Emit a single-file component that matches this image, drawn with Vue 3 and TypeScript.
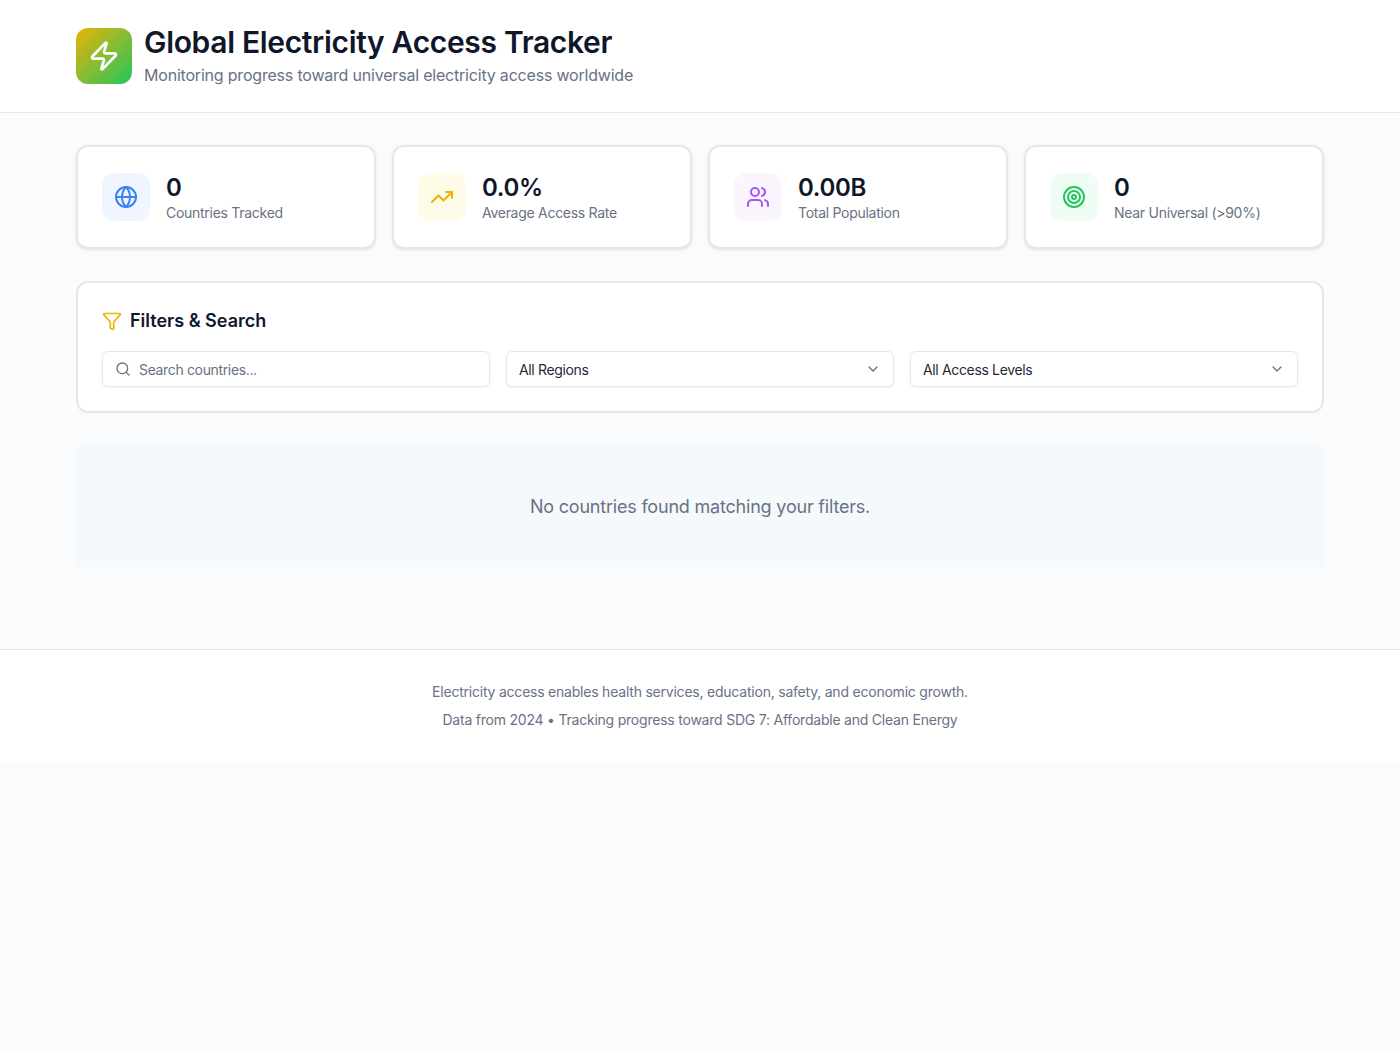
<script setup lang="ts">
const stats = [
  { value: '0', label: 'Countries Tracked', tone: 'blue', icon: 'globe' },
  { value: '0.0%', label: 'Average Access Rate', tone: 'yellow', icon: 'trend' },
  { value: '0.00B', label: 'Total Population', tone: 'purple', icon: 'users' },
  { value: '0', label: 'Near Universal (>90%)', tone: 'green', icon: 'target' },
]
const selects = ['All Regions', 'All Access Levels']
</script>

<template>
  <div class="page">
    <header class="header">
      <div class="wrap header__inner">
        <div class="logo">
          <svg width="32" height="32" viewBox="0 0 24 24" fill="none" stroke="#fff" stroke-width="2" stroke-linecap="round" stroke-linejoin="round">
            <path d="M4 14a1 1 0 0 1-.78-1.63l9.9-10.2a.5.5 0 0 1 .86.46l-1.92 6.02A1 1 0 0 0 13 10h7a1 1 0 0 1 .78 1.63l-9.9 10.2a.5.5 0 0 1-.86-.46l1.92-6.02A1 1 0 0 0 11 14z" />
          </svg>
        </div>
        <div>
          <h1 class="title">Global Electricity Access Tracker</h1>
          <p class="subtitle">Monitoring progress toward universal electricity access worldwide</p>
        </div>
      </div>
    </header>

    <main class="wrap main">
      <section class="stats">
        <div v-for="s in stats" :key="s.label" class="card stat">
          <div class="stat__icon" :class="`stat__icon--${s.tone}`">
            <svg width="24" height="24" viewBox="0 0 24 24" fill="none" stroke="currentColor" stroke-width="2" stroke-linecap="round" stroke-linejoin="round">
              <template v-if="s.icon === 'globe'">
                <circle cx="12" cy="12" r="10" />
                <path d="M12 2a14.5 14.5 0 0 0 0 20 14.5 14.5 0 0 0 0-20" />
                <path d="M2 12h20" />
              </template>
              <template v-else-if="s.icon === 'trend'">
                <path d="M16 7h6v6" />
                <path d="m22 7-8.5 8.5-5-5L2 17" />
              </template>
              <template v-else-if="s.icon === 'users'">
                <path d="M16 21v-2a4 4 0 0 0-4-4H6a4 4 0 0 0-4 4v2" />
                <circle cx="9" cy="7" r="4" />
                <path d="M22 21v-2a4 4 0 0 0-3-3.87" />
                <path d="M16 3.13a4 4 0 0 1 0 7.75" />
              </template>
              <template v-else>
                <circle cx="12" cy="12" r="10" />
                <circle cx="12" cy="12" r="6" />
                <circle cx="12" cy="12" r="2" />
              </template>
            </svg>
          </div>
          <div>
            <div class="stat__value">{{ s.value }}</div>
            <div class="stat__label">{{ s.label }}</div>
          </div>
        </div>
      </section>

      <section class="card filters">
        <h2 class="filters__title">
          <svg width="20" height="20" viewBox="0 0 24 24" fill="none" stroke="#eab308" stroke-width="2" stroke-linecap="round" stroke-linejoin="round">
            <path d="M10 20a1 1 0 0 0 .55.9l2 1A1 1 0 0 0 14 21v-7a2 2 0 0 1 .52-1.34L21.74 4.67A1 1 0 0 0 21 3H3a1 1 0 0 0-.74 1.67l7.22 7.99A2 2 0 0 1 10 14z" />
          </svg>
          Filters &amp; Search
        </h2>
        <div class="filters__row">
          <div class="control">
            <svg width="16" height="16" viewBox="0 0 24 24" fill="none" stroke="#6b7280" stroke-width="2" stroke-linecap="round" stroke-linejoin="round">
              <path d="m21 21-4.34-4.34" />
              <circle cx="11" cy="11" r="8" />
            </svg>
            <span class="control__placeholder">Search countries...</span>
          </div>
          <div v-for="label in selects" :key="label" class="control control--select">
            <span>{{ label }}</span>
            <svg width="16" height="16" viewBox="0 0 24 24" fill="none" stroke="#6b7280" stroke-width="2" stroke-linecap="round" stroke-linejoin="round">
              <path d="m6 9 6 6 6-6" />
            </svg>
          </div>
        </div>
      </section>

      <section class="empty">No countries found matching your filters.</section>
    </main>

    <footer class="footer">
      <p>Electricity access enables health services, education, safety, and economic growth.</p>
      <p>Data from 2024 • Tracking progress toward SDG 7: Affordable and Clean Energy</p>
    </footer>
  </div>
</template>

<style>
body {
  background: #f9fbfd;
}
</style>

<style scoped>
.page {
  font-family: Inter, "Noto Sans", sans-serif;
  color: #0f172a;
}

.wrap {
  width: 1248px;
  margin: 0 auto;
}

.header {
  height: 113px;
  box-sizing: border-box;
  background: #fff;
  border-bottom: 1px solid #e5e7eb;
}

.header__inner {
  display: flex;
  align-items: center;
  gap: 12px;
  height: 112px;
}

.logo {
  width: 56px;
  height: 56px;
  border-radius: 12px;
  background: linear-gradient(135deg, #eab308, #22c55e);
  display: flex;
  align-items: center;
  justify-content: center;
}

.title {
  margin: 0;
  font-size: 30px;
  line-height: 36px;
  font-weight: 600;
  letter-spacing: -0.33px;
}

.subtitle {
  margin: 3px 0 1px;
  font-size: 16px;
  line-height: 24px;
  letter-spacing: -0.2px;
  color: #687284;
}

.main {
  padding-top: 32px;
}

.card {
  box-sizing: border-box;
  background: #fff;
  border: 2px solid #e5e7eb;
  border-radius: 12px;
}

.stats {
  display: grid;
  grid-template-columns: repeat(4, 1fr);
  gap: 16px;
}

.stat {
  height: 104px;
  padding: 0 24px;
  display: flex;
  align-items: center;
  gap: 16px;
  box-shadow: 0 1px 3px rgba(0, 0, 0, 0.1);
}

.stat__icon {
  width: 48px;
  height: 48px;
  border-radius: 12px;
  display: flex;
  align-items: center;
  justify-content: center;
}
.stat__icon--blue {
  background: #eff6ff;
  color: #3b82f6;
}
.stat__icon--yellow {
  background: #fefce8;
  color: #eab308;
}
.stat__icon--purple {
  background: #faf5ff;
  color: #a855f7;
}
.stat__icon--green {
  background: #f0fdf4;
  color: #22c55e;
}

.stat__value {
  font-size: 24px;
  line-height: 32px;
  font-weight: 600;
  letter-spacing: -0.3px;
  padding-top: 1px;
  margin-bottom: -1px;
}

.stat__label {
  font-size: 14px;
  line-height: 20px;
  letter-spacing: -0.28px;
  color: #687284;
}

.filters {
  margin-top: 32px;
  height: 132px;
  padding: 24px;
}

.filters__title {
  margin: 0;
  display: flex;
  align-items: center;
  gap: 8px;
  font-size: 18px;
  line-height: 28px;
  font-weight: 600;
  letter-spacing: 0;
}

.filters__row {
  margin-top: 16px;
  display: grid;
  grid-template-columns: repeat(3, 1fr);
  gap: 16px;
}

.control {
  box-sizing: border-box;
  height: 36px;
  padding: 0 12px;
  display: flex;
  align-items: center;
  gap: 8px;
  background: #fff;
  border: 1px solid #e5e7eb;
  border-radius: 6px;
  box-shadow: 0 1px 2px rgba(0, 0, 0, 0.05);
  font-size: 14px;
  letter-spacing: -0.35px;
  color: #1f2937;
}

.control--select {
  justify-content: space-between;
}

.control__placeholder {
  color: #687284;
}

.empty {
  margin-top: 32px;
  height: 122px;
  padding-top: 1px;
  box-sizing: border-box;
  display: flex;
  align-items: center;
  justify-content: center;
  background: #f5f9fc;
  border-radius: 4px;
  font-size: 18px;
  letter-spacing: -0.2px;
  color: #687284;
}

.footer {
  margin-top: 82px;
  height: 113px;
  box-sizing: border-box;
  padding-top: 32px;
  background: #fff;
  border-top: 1px solid #e5e7eb;
  text-align: center;
  font-size: 14px;
  letter-spacing: -0.22px;
  color: #687284;
}

.footer p {
  margin: 0 0 8px;
  line-height: 20px;
}
</style>
